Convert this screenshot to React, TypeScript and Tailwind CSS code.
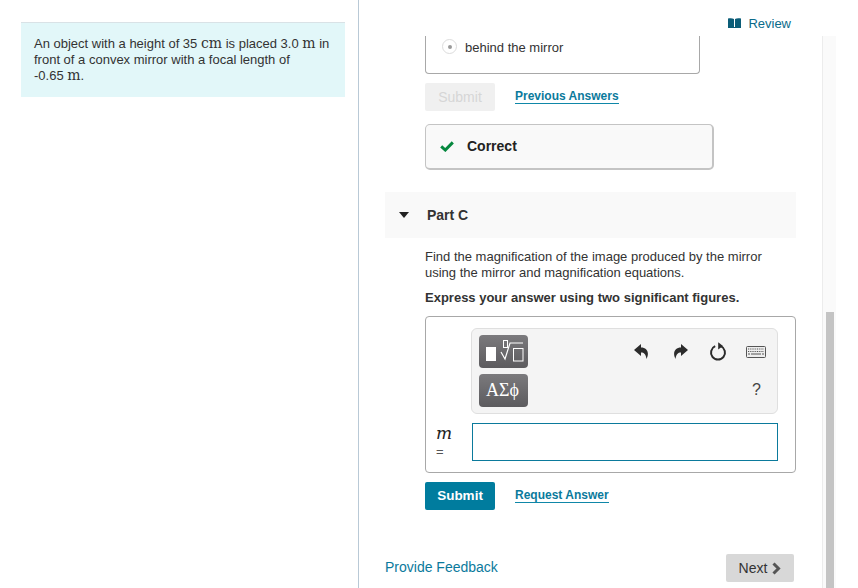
function Unit({ children }: { children: string }) {
  return <span className="font-['DejaVu_Serif',serif] text-[14px] leading-[12px]">{children}</span>;
}

function BookIcon() {
  return (
    <svg width="13" height="10" viewBox="0 0 13 10" className="fill-[#0b5d78]">
      <path d="M0 .6C2 .1 4.400 .1 6 1v8.300H0z" />
      <path d="M7 1c1.600-.9 4-.9 6-.4v8.700H7z" />
      <path d="M0 9h13v1H0z" />
    </svg>
  );
}

function CheckIcon() {
  return (
    <svg width="14" height="11" viewBox="0 0 14 11" fill="none">
      <path d="M1.200 5.300L5.300 9L12.800 1.400" stroke="#06883f" strokeWidth="3" />
    </svg>
  );
}

function ChevronIcon() {
  return (
    <svg width="9" height="13" viewBox="0 0 9 13" fill="none">
      <path d="M1.500 1.500L6.500 6.500L1.500 11.500" stroke="#555" strokeWidth="3" />
    </svg>
  );
}

function ReplyIcon() {
  return (
    <svg width="15" height="15" viewBox="0 0 15 15" fill="#2b2b2b">
      <path d="M7 0L0 6l7 6V8.500c3 0 4.800 1.500 5.500 6.500C15.800 8.500 13 3.500 7 3.500z" />
    </svg>
  );
}

function ForwardIcon() {
  return (
    <svg width="15" height="15" viewBox="0 0 15 15" fill="#2b2b2b">
      <path d="M8 0l7 6-7 6V8.500c-3 0-4.800 1.500-5.500 6.500C-.8 8.500 2 3.500 8 3.500z" />
    </svg>
  );
}

function RedoCircle() {
  return (
    <svg width="18" height="20" viewBox="0 0 18 20" fill="none">
      <path d="M11.800 5.200a7 7 0 1 1-5.600 0" stroke="#2b2b2b" strokeWidth="2" />
      <path d="M9.200 1.200v7.400l4.800-3.700z" fill="#2b2b2b" />
    </svg>
  );
}

function KeyboardIcon() {
  return (
    <svg width="20" height="12" viewBox="0 0 20 12" fill="none">
      <rect x="0.500" y="0.500" width="19" height="11" rx="1" fill="#eee" stroke="#555" />
      <path d="M2 3h16M2 5.500h16" stroke="#555" strokeWidth="1.200" strokeDasharray="1 0.800" />
      <path d="M2 8h2M5 8h10M16 8h2" stroke="#555" strokeWidth="1.200" />
    </svg>
  );
}

function TemplateIcon() {
  return (
    <svg width="49" height="33" viewBox="0 0 49 33" fill="none">
      <rect x="7" y="12" width="10" height="14" fill="#fff" />
      <rect x="24.500" y="5.500" width="4" height="7" stroke="#fff" />
      <path d="M22 17l4 7 5-16h13" stroke="#fff" strokeWidth="1.200" />
      <rect x="34.500" y="13.500" width="9.500" height="12.500" stroke="#fff" />
    </svg>
  );
}

function ToolButton({ children }: { children: React.ReactNode }) {
  return (
    <div className="flex h-[33px] w-[49px] items-center justify-center rounded-[4px] bg-gradient-to-b from-[#7b7a7d] to-[#5c5b5e] text-white">
      {children}
    </div>
  );
}

export default function App() {
  return (
    <div className="flex h-[588px] w-[858px] overflow-hidden bg-white font-['Liberation_Sans',sans-serif] text-[13px] text-[#333]">
      <aside className="h-full w-[359px] shrink-0 border-r border-[#b9c9d6] pl-[21px] pt-[22px]">
        <div className="h-[75px] w-[324px] border-t border-[#d9e2e6] bg-[#e2f7f9] px-[13px] pt-[13px] leading-[16px]">
          An object with a height of 35 <Unit>cm</Unit> is placed 3.0 <Unit>m</Unit> in
          <br />
          front of a convex mirror with a focal length of
          <br />
          -0.65 <Unit>m</Unit>.
        </div>
      </aside>

      <main className="flex min-w-0 flex-1 flex-col">
        <header className="flex h-[36px] shrink-0 items-start justify-end gap-[7px] pr-[67px] pt-[15px] text-[#0b6b8a]">
          <span className="mt-[3px]">
            <BookIcon />
          </span>
          <span className="leading-[17px]">Review</span>
        </header>

        <div className="flex min-h-0 flex-1">
          <div className="w-[463px] shrink-0 pl-[26px]">
            <div className="ml-[40px]">
              <div className="flex h-[38px] w-[275px] items-start gap-[8px] rounded-b-[4px] border border-t-0 border-[#a8a8a8] pl-[16px] pt-[3px]">
                <span className="flex h-[15px] w-[15px] items-center justify-center rounded-full border border-[#dcdcdc] bg-white">
                  <span className="h-[4px] w-[4px] rounded-full bg-[#9a9a9a]" />
                </span>
                <span className="leading-[17px]">behind the mirror</span>
              </div>

              <div className="mt-[9px] flex items-center gap-[20px]">
                <div className="flex h-[28px] w-[70px] items-center justify-center rounded-[2px] bg-[#f0f0f0] text-[14px] text-[#d6d6d6]">
                  Submit
                </div>
                <a className="border-b border-[#0f87a8] text-[12px] font-bold leading-[13px] text-[#0b7a9c]">
                  Previous Answers
                </a>
              </div>

              <div className="mt-[13px] flex h-[46px] w-[289px] items-center rounded-[5px] border border-b-2 border-r-2 border-[#c4c4c4] bg-[#f9f9f9] pl-[14px]">
                <CheckIcon />
                <span className="ml-[13px] text-[14px] font-bold text-[#222]">Correct</span>
              </div>
            </div>

            <section className="mt-[22px] flex h-[46px] w-[411px] items-center bg-[#f9f9f9] pl-[14px]">
              <span className="h-0 w-0 border-x-[5.5px] border-t-[6px] border-x-transparent border-t-[#222]" />
              <span className="ml-[18px] text-[14px] font-bold text-[#333]">Part C</span>
            </section>

            <div className="ml-[40px]">
              <p className="mt-[11px] leading-[15.7px]">
                Find the magnification of the image produced by the mirror
                <br />
                using the mirror and magnification equations.
              </p>
              <p className="mt-[10px] font-bold leading-[16px]">Express your answer using two significant figures.</p>

              <div className="mt-[10px] h-[157px] w-[371px] rounded-[4px] border border-[#a8a8a8] pl-[45px] pt-[11px]">
                <div className="flex h-[86px] w-[307px] justify-between rounded-[6px] border border-[#dfdfdf] bg-[#f4f4f4] pl-[7px] pr-[11px] pt-[6px]">
                  <div className="flex flex-col gap-[6px]">
                    <ToolButton>
                      <TemplateIcon />
                    </ToolButton>
                    <ToolButton>
                      <span className="pr-[2px] font-['Liberation_Serif',serif] text-[18px]">ΑΣϕ</span>
                    </ToolButton>
                  </div>
                  <div className="flex flex-col items-end">
                    <div className="flex h-[33px] items-center">
                      <ReplyIcon />
                      <span className="ml-[24px]">
                        <ForwardIcon />
                      </span>
                      <span className="ml-[21px] mt-[-1px]">
                        <RedoCircle />
                      </span>
                      <span className="ml-[19px]">
                        <KeyboardIcon />
                      </span>
                    </div>
                    <span className="mr-[5px] mt-[13px] text-[16px] leading-[18px] text-[#444]">?</span>
                  </div>
                </div>

                <div className="-ml-[35px] mt-[9px] flex">
                  <div className="w-[36px] pt-[2px]">
                    <div className="font-['DejaVu_Serif',serif] text-[17px] italic leading-[17px] text-[#222]">m</div>
                    <div className="mt-[2px] text-[13px] leading-[15px] text-[#555]">=</div>
                  </div>
                  <div className="h-[38px] w-[306px] border border-[#0b7a9c] bg-white" />
                </div>
              </div>

              <div className="mt-[9px] flex items-center gap-[20px]">
                <div className="flex h-[28px] w-[70px] items-center justify-center rounded-[2px] bg-[#007c9e] text-[13.5px] font-bold text-white">
                  Submit
                </div>
                <a className="border-b border-[#0f87a8] text-[12px] font-bold leading-[13px] text-[#0b7a9c]">
                  Request Answer
                </a>
              </div>
            </div>

            <footer className="mt-[44px] flex h-[28px] w-[409px] items-center justify-between">
              <a className="mt-[-2px] pt-[1px] text-[14px] text-[#0b7a9c]">Provide Feedback</a>
              <div className="flex h-[28px] w-[68px] items-center justify-center gap-[5px] rounded-[2px] bg-[#d8d8d8] text-[14px] text-[#333]">
                Next
                <ChevronIcon />
              </div>
            </footer>
          </div>

          <div className="flex w-[14px] flex-col items-end border-l border-[#ececec] bg-[#fafafa] pr-[2px]">
            <div className="mt-[276px] h-[276px] w-[8px] bg-[#c4c4c4]" />
          </div>
        </div>
      </main>
    </div>
  );
}
